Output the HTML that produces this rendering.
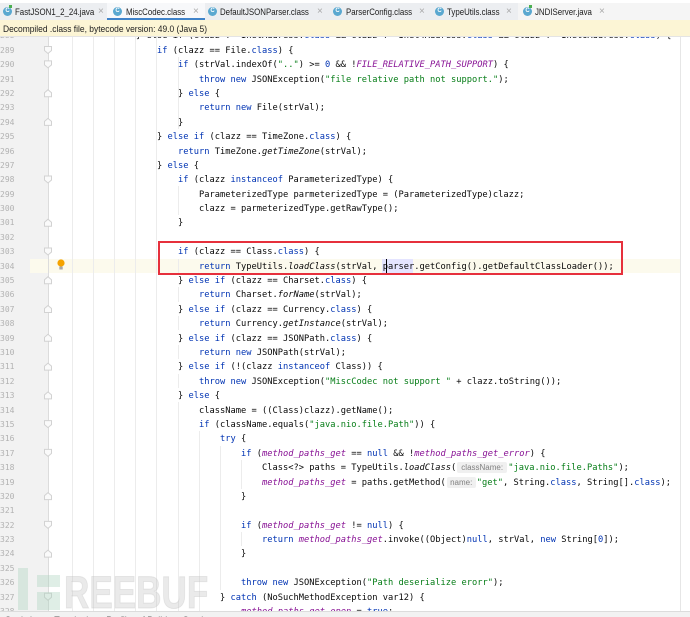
<!DOCTYPE html>
<html><head><meta charset="utf-8">
<style>
html,body{margin:0;padding:0;background:#fff}
#r{position:relative;width:690px;height:617px;overflow:hidden;background:#fff;filter:blur(.3px)}
#r div,#r pre,#r span.a{position:absolute}
pre{margin:0;font-family:"DejaVu Sans Mono","Liberation Mono",monospace;font-size:8.72px;line-height:14.39px;color:#080808}
.g{width:1px;background:#ececec}
.k{color:#0033b3}.s{color:#067d17}.f{color:#871094;font-style:italic}.i{font-style:italic}
.h{display:inline-block;background:#f0f0f0;color:#808080;font-family:"Liberation Sans",sans-serif;font-size:8px;line-height:11px;text-align:center;border-radius:2px}
.t{font-family:"Liberation Sans",sans-serif;font-size:9.4px;color:#1c1c1c;top:5px;line-height:14px;white-space:nowrap;transform:scaleX(.84);transform-origin:0 0}
.x{font-family:"Liberation Sans",sans-serif;font-size:10px;color:#a8a8a8;top:5px;line-height:14px}
.c{width:9px;height:9px;border-radius:50%;background:#5aa8d0;top:7px;color:#fff;font:bold 6px/9px "Liberation Sans",sans-serif;text-align:center}
</style></head><body>
<div id="r">
<!-- editor background -->
<div style="left:0;top:37px;width:48px;height:574px;background:#f2f2f2"></div>
<div style="left:0;top:259px;width:680px;height:14px;background:#fcfaed"></div>
<div style="left:0;top:259px;width:30px;height:14px;background:#f2f2f2"></div>
<div style="left:48px;top:37px;width:1px;height:574px;background:#dcdcdc"></div>
<div style="left:680px;top:37px;width:1px;height:574px;background:#e6e6e6"></div>
<!-- indent guides -->
<div class="g" style="left:72px;top:37px;height:574px"></div>
<div class="g" style="left:93px;top:37px;height:574px"></div>
<div class="g" style="left:114px;top:37px;height:574px"></div>
<div class="g" style="left:135px;top:37px;height:574px"></div>
<div class="g" style="left:156px;top:37px;height:574px"></div>
<div class="g" style="left:178px;top:57px;height:72px"></div>
<div class="g" style="left:178px;top:186px;height:29px"></div>
<div class="g" style="left:178px;top:259px;height:14px"></div>
<div class="g" style="left:178px;top:287px;height:15px"></div>
<div class="g" style="left:178px;top:316px;height:14px"></div>
<div class="g" style="left:178px;top:345px;height:14px"></div>
<div class="g" style="left:178px;top:374px;height:14px"></div>
<div class="g" style="left:178px;top:402px;height:209px"></div>
<div class="g" style="left:199px;top:431px;height:180px"></div>
<div class="g" style="left:220px;top:446px;height:144px"></div>
<div class="g" style="left:241px;top:460px;height:29px"></div>
<div class="g" style="left:241px;top:532px;height:14px"></div>
<div style="left:382px;top:259px;width:31px;height:14px;background:#e4e4ff"></div>
<!-- line numbers -->
<pre style="left:0;top:29.4px;font-size:8px;color:#b2b2b2">288
289
290
291
292
293
294
295
296
297
298
299
300
301
302
303
304
305
306
307
308
309
310
311
312
313
314
315
316
317
318
319
320
321
322
323
324
325
326
327
328</pre>
<!-- fold markers -->
<svg style="position:absolute;left:43px;top:0" width="11" height="611" viewBox="0 0 11 611">
<defs>
<path id="d" d="M1.5-3.5H8.5V.5L5 3.5 1.5.5Z" fill="#fafafa" stroke="#d2d2d2"/>
<path id="u" d="M1.5 3.5H8.5V-.5L5-3.5 1.5-.5Z" fill="#fafafa" stroke="#d2d2d2"/>
</defs>
<use href="#d" y="50"/><use href="#d" y="64.4"/><use href="#u" y="93.2"/><use href="#u" y="121.9"/>
<use href="#d" y="179.5"/><use href="#u" y="222.7"/><use href="#d" y="251.5"/><use href="#u" y="280.2"/>
<use href="#u" y="309"/><use href="#u" y="337.8"/><use href="#u" y="366.6"/><use href="#u" y="395.4"/>
<use href="#d" y="424.1"/><use href="#d" y="452.9"/><use href="#u" y="496.1"/><use href="#d" y="524.9"/>
<use href="#u" y="553.6"/><use href="#d" y="596.8"/>
</svg>
<!-- bulb -->
<svg style="position:absolute;left:56px;top:259px" width="10" height="12" viewBox="0 0 10 12">
<circle cx="5" cy="4" r="3.6" fill="#f5a300"/><rect x="3.3" y="7.5" width="3.4" height="3" fill="#a8a8a8"/>
</svg>
<!-- code -->
<pre style="left:73px;top:29.4px">            } else if (clazz != InetAddress.<span class="k">class</span> &amp;&amp; clazz != Inet4Address.<span class="k">class</span> &amp;&amp; clazz != Inet6Address.<span class="k">class</span>) {
                <span class="k">if</span> (clazz == File.<span class="k">class</span>) {
                    <span class="k">if</span> (strVal.indexOf(<span class="s">".."</span>) &gt;= <span class="k">0</span> &amp;&amp; !<span class="f">FILE_RELATIVE_PATH_SUPPORT</span>) {
                        <span class="k">throw new</span> JSONException(<span class="s">"file relative path not support."</span>);
                    } <span class="k">else</span> {
                        <span class="k">return new</span> File(strVal);
                    }
                } <span class="k">else if</span> (clazz == TimeZone.<span class="k">class</span>) {
                    <span class="k">return</span> TimeZone.<span class="i">getTimeZone</span>(strVal);
                } <span class="k">else</span> {
                    <span class="k">if</span> (clazz <span class="k">instanceof</span> ParameterizedType) {
                        ParameterizedType parmeterizedType = (ParameterizedType)clazz;
                        clazz = parmeterizedType.getRawType();
                    }

                    <span class="k">if</span> (clazz == Class.<span class="k">class</span>) {
                        <span class="k">return</span> TypeUtils.<span class="i">loadClass</span>(strVal, parser.getConfig().getDefaultClassLoader());
                    } <span class="k">else if</span> (clazz == Charset.<span class="k">class</span>) {
                        <span class="k">return</span> Charset.<span class="i">forName</span>(strVal);
                    } <span class="k">else if</span> (clazz == Currency.<span class="k">class</span>) {
                        <span class="k">return</span> Currency.<span class="i">getInstance</span>(strVal);
                    } <span class="k">else if</span> (clazz == JSONPath.<span class="k">class</span>) {
                        <span class="k">return new</span> JSONPath(strVal);
                    } <span class="k">else if</span> (!(clazz <span class="k">instanceof</span> Class)) {
                        <span class="k">throw new</span> JSONException(<span class="s">"MiscCodec not support "</span> + clazz.toString());
                    } <span class="k">else</span> {
                        className = ((Class)clazz).getName();
                        <span class="k">if</span> (className.equals(<span class="s">"java.nio.file.Path"</span>)) {
                            <span class="k">try</span> {
                                <span class="k">if</span> (<span class="f">method_paths_get</span> == <span class="k">null</span> &amp;&amp; !<span class="f">method_paths_get_error</span>) {
                                    Class&lt;?&gt; paths = TypeUtils.<span class="i">loadClass</span>(<span class="h" style="width:50px;margin:0 1px 0 1px">className:</span><span class="s">"java.nio.file.Paths"</span>);
                                    <span class="f">method_paths_get</span> = paths.getMethod(<span class="h" style="width:29px;margin:0 1px 0 1px">name:</span><span class="s">"get"</span>, String.<span class="k">class</span>, String[].<span class="k">class</span>);
                                }

                                <span class="k">if</span> (<span class="f">method_paths_get</span> != <span class="k">null</span>) {
                                    <span class="k">return</span> <span class="f">method_paths_get</span>.invoke((Object)<span class="k">null</span>, strVal, <span class="k">new</span> String[<span class="k">0</span>]);
                                }

                                <span class="k">throw new</span> JSONException(<span class="s">"Path deserialize erorr"</span>);
                            } <span class="k">catch</span> (NoSuchMethodException var12) {
                                <span class="f">method_paths_get_open</span> = <span class="k">true</span>;</pre>
<!-- caret -->
<div style="left:386px;top:259px;width:1px;height:14px;background:#000"></div>
<!-- red box -->
<div style="left:158px;top:240.5px;width:461px;height:30px;border:2px solid #e6303c"></div>
<!-- watermark -->
<div style="left:18px;top:568px;width:10px;height:42px;background:rgba(170,210,190,.38)"></div>
<div style="left:37px;top:575px;width:23px;height:12px;background:rgba(170,210,190,.38)"></div>
<div style="left:37px;top:592px;width:23px;height:18px;background:rgba(170,210,190,.38)"></div>
<div style="left:64px;top:567px;font:bold 45px/52px 'Liberation Sans',sans-serif;color:rgba(190,190,190,.33);-webkit-text-stroke:1px rgba(190,190,190,.33);transform:scaleX(.78);transform-origin:0 0;white-space:nowrap">REEBUF</div>
<!-- bottom bar -->
<div style="left:0;top:611px;width:690px;height:6px;background:#f2f2f2;border-top:1px solid #dcdcdc"></div>
<div style="left:0;top:614px;width:260px;height:3px;overflow:hidden;font:9px/12px 'Liberation Sans',sans-serif;color:#555;white-space:nowrap">&nbsp;&nbsp;Statistic&nbsp;&nbsp;&nbsp;&nbsp;■ Terminal&nbsp;&nbsp;&nbsp;&nbsp;○ Profiler&nbsp;&nbsp;&nbsp;f Build&nbsp;&nbsp;&nbsp;● Services</div>
<!-- top -->
<div style="left:0;top:0;width:690px;height:3px;background:#fff;border-bottom:1px solid #dedede"></div>
<div style="left:0;top:3px;width:518px;height:17px;background:#eceef1"></div>
<div style="left:518px;top:3px;width:172px;height:17px;background:#f5f5f5"></div>
<div style="left:107px;top:3px;width:98px;height:17px;background:#f7f8fa"></div>
<div style="left:107px;top:18px;width:98px;height:2px;background:#4083c9"></div>
<div style="left:0;top:20px;width:690px;height:16px;background:#fcf5d5;border-bottom:1px solid #e4e4e4"></div>
<div class="c" style="left:3px">C</div><div style="left:9px;top:5px;width:3px;height:3px;background:#4caf50"></div>
<div class="t" style="left:15px">FastJSON1_2_24.java</div><div class="x" style="left:98px">×</div>
<div class="c" style="left:113px">C</div>
<div class="t" style="left:126px">MiscCodec.class</div><div class="x" style="left:193px">×</div>
<div class="c" style="left:208px">C</div>
<div class="t" style="left:220px">DefaultJSONParser.class</div><div class="x" style="left:317px">×</div>
<div class="c" style="left:333px">C</div>
<div class="t" style="left:346px">ParserConfig.class</div><div class="x" style="left:419px">×</div>
<div class="c" style="left:435px">C</div>
<div class="t" style="left:447px">TypeUtils.class</div><div class="x" style="left:506px">×</div>
<div class="c" style="left:523px">C</div><div style="left:529px;top:5px;width:3px;height:3px;background:#4caf50"></div>
<div class="t" style="left:535px">JNDIServer.java</div><div class="x" style="left:599px">×</div>
<div class="t" style="left:3px;top:22px;color:#222;transform:scaleX(.9)">Decompiled .class file, bytecode version: 49.0 (Java 5)</div>
</div>
</body></html>
